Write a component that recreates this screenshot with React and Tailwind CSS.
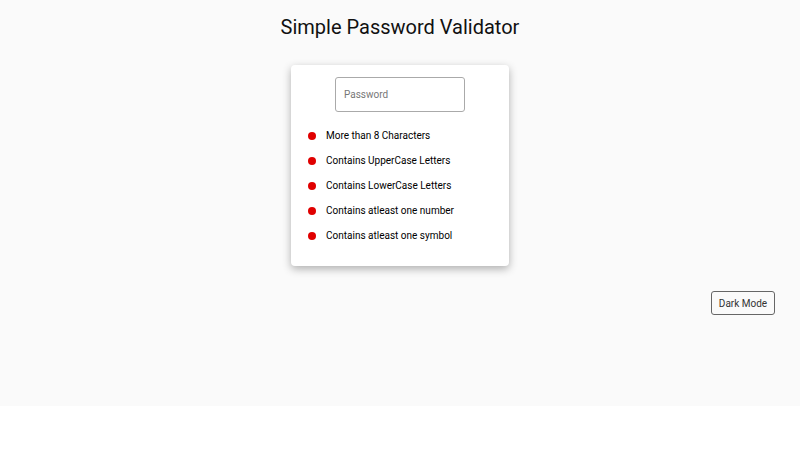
export default function App() {
  const items = [
    "More than 8 Characters",
    "Contains UpperCase Letters",
    "Contains LowerCase Letters",
    "Contains atleast one number",
    "Contains atleast one symbol",
  ];
  return (
    <div className="bg-[#fafafa] h-[406px] font-['Roboto',sans-serif] text-[#111]">
      <h1 className="text-[20px] leading-[26px] text-center pt-[14px] font-normal">
        Simple Password Validator
      </h1>
      <div className="mx-auto mt-[25px] w-[218px] bg-white rounded-[4px] shadow-[0_3px_8px_rgba(0,0,0,0.3)] pt-[12px] pb-[18px]">
        <div className="flex justify-center">
          <input
            placeholder="Password"
            className="w-[130px] h-[35px] border border-[#aaa] rounded-[3px] px-[8px] text-[10px] placeholder:text-[#777] outline-none"
          />
        </div>
        <ul className="mt-[11px]">
          {items.map((t) => (
            <li key={t} className="flex items-center h-[25px] pl-[17px]">
              <span className="w-[8px] h-[8px] rounded-full bg-[#e00000]" />
              <span className="ml-[10px] text-[10px] text-black">{t}</span>
            </li>
          ))}
        </ul>
      </div>
      <div className="flex justify-end pr-[25px] mt-[25px]">
        <button className="w-[64px] h-[24px] border border-[#666] rounded-[3px] text-[10px] text-[#333] bg-transparent">
          Dark Mode
        </button>
      </div>
    </div>
  );
}
